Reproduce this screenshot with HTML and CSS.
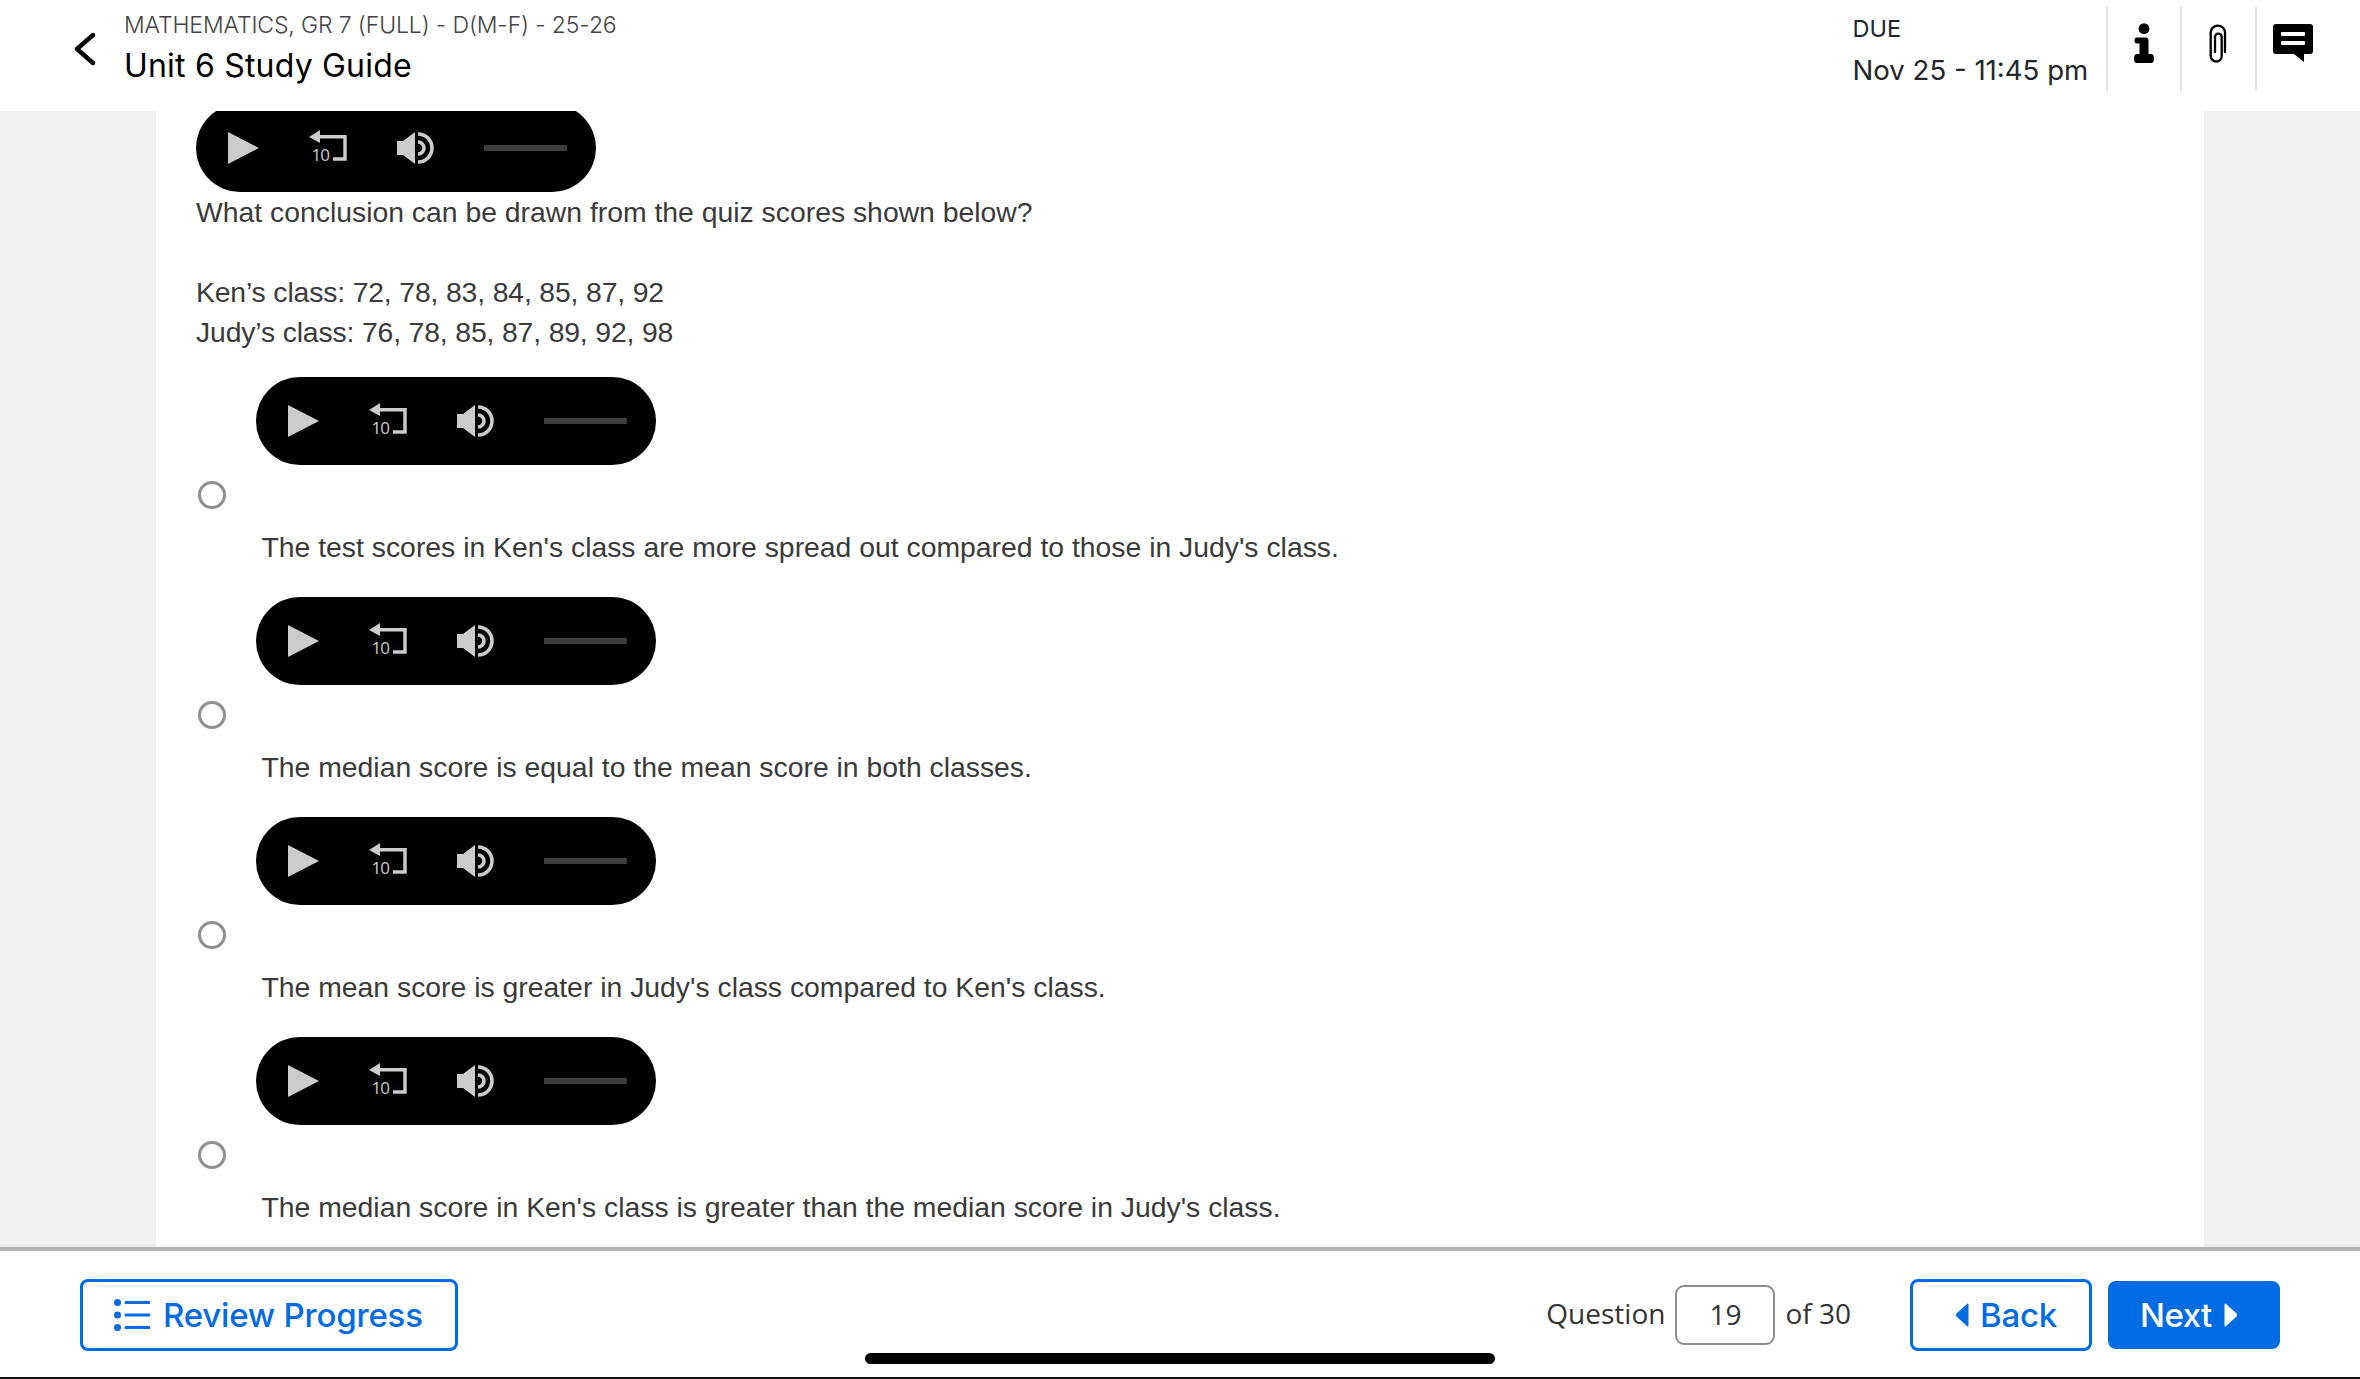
FILE: index.html
```html
<!DOCTYPE html>
<html lang="en">
<head>
<meta charset="utf-8">
<title>Unit 6 Study Guide</title>
<link rel="stylesheet" href="styles.css">
</head>
<body>
<svg class="defs" width="0" height="0" aria-hidden="true">
  <symbol id="i-play" viewBox="0 0 31 32"><polygon points="0,0 31,16 0,32"/></symbol>
  <symbol id="i-rew" viewBox="0 0 38 32">
    <polygon points="0,8 11,1 11,14"/>
    <path d="M10 7.7H36V30H24" fill="none" stroke="currentColor" stroke-width="3.4"/>
  </symbol>
  <symbol id="i-vol" viewBox="0 0 38 34">
    <polygon points="0,10 6,10 18,1 18,33 6,24 0,24"/>
    <path d="M21 11A6 6 0 0 1 21 23M21 3A14 14 0 0 1 21 31" fill="none" stroke="currentColor" stroke-width="3.6"/>
  </symbol>
</svg>
<div class="app">
  <header class="topbar">
    <svg class="chev" viewBox="0 0 24 34"><polyline points="21,3 5,17 21,31"/></svg>
    <div class="titles">
      <div class="course">MATHEMATICS, GR 7 (FULL) - D(M-F) - 25-26</div>
      <div class="title">Unit 6 Study Guide</div>
    </div>
    <div class="due">
      <div class="due-label">DUE</div>
      <div class="due-date">Nov 25 - 11:45 pm</div>
    </div>
    <div class="tool">
      <svg class="ic-info" viewBox="0 0 20 40"><circle cx="10" cy="5.6" r="5.4"/><path d="M3 14.5H11.5Q14.5 14.5 14.5 17.5V31H17Q20 31 20 35.5T17 40H3Q0 40 0 35.5T3 31H5.5V20.5H3Q0.5 20.5 0.5 17.5T3 14.5Z"/></svg>
    </div>
    <div class="tool">
      <svg class="ic-clip" viewBox="0 0 18 40"><path d="M16 29V9A7.2 7.2 0 0 0 1.7 9V33A5.5 5.5 0 0 0 12.7 33V14A3.3 3.3 0 0 0 6 14V29"/></svg>
    </div>
    <div class="tool">
      <svg class="ic-chat" viewBox="0 0 40 38"><path d="M3 0H37Q40 0 40 3V27Q40 30 37 30H31V38L21 30H3Q0 30 0 27V3Q0 0 3 0Z"/><rect x="8" y="8" width="24" height="4" rx="1" class="bar"/><rect x="8" y="17" width="24" height="4" rx="1" class="bar"/></svg>
    </div>
  </header>

  <main class="stage">
    <section class="sheet">
      <div class="player first">
        <svg class="p-play"><use href="#i-play"/></svg>
        <svg class="p-rew" viewBox="0 0 38 32"><use href="#i-rew"/><text x="2.5" y="32" class="rew-text">10</text></svg>
        <svg class="p-vol"><use href="#i-vol"/></svg>
        <span class="track"></span>
      </div>
      <p class="question">What conclusion can be drawn from the quiz scores shown below?</p>
      <p class="data">Ken’s class: 72, 78, 83, 84, 85, 87, 92<br>Judy’s class: 76, 78, 85, 87, 89, 92, 98</p>

      <div class="option">
        <div class="player">
          <svg class="p-play"><use href="#i-play"/></svg>
          <svg class="p-rew" viewBox="0 0 38 32"><use href="#i-rew"/><text x="2.5" y="32" class="rew-text">10</text></svg>
          <svg class="p-vol"><use href="#i-vol"/></svg>
          <span class="track"></span>
        </div>
        <span class="radio"></span>
        <p class="answer">The test scores in Ken's class are more spread out compared to those in Judy's class.</p>
      </div>

      <div class="option">
        <div class="player">
          <svg class="p-play"><use href="#i-play"/></svg>
          <svg class="p-rew" viewBox="0 0 38 32"><use href="#i-rew"/><text x="2.5" y="32" class="rew-text">10</text></svg>
          <svg class="p-vol"><use href="#i-vol"/></svg>
          <span class="track"></span>
        </div>
        <span class="radio"></span>
        <p class="answer">The median score is equal to the mean score in both classes.</p>
      </div>

      <div class="option">
        <div class="player">
          <svg class="p-play"><use href="#i-play"/></svg>
          <svg class="p-rew" viewBox="0 0 38 32"><use href="#i-rew"/><text x="2.5" y="32" class="rew-text">10</text></svg>
          <svg class="p-vol"><use href="#i-vol"/></svg>
          <span class="track"></span>
        </div>
        <span class="radio"></span>
        <p class="answer">The mean score is greater in Judy's class compared to Ken's class.</p>
      </div>

      <div class="option">
        <div class="player">
          <svg class="p-play"><use href="#i-play"/></svg>
          <svg class="p-rew" viewBox="0 0 38 32"><use href="#i-rew"/><text x="2.5" y="32" class="rew-text">10</text></svg>
          <svg class="p-vol"><use href="#i-vol"/></svg>
          <span class="track"></span>
        </div>
        <span class="radio"></span>
        <p class="answer">The median score in Ken's class is greater than the median score in Judy's class.</p>
      </div>
    </section>
  </main>

  <footer class="bottombar">
    <a class="btn btn-review">
      <svg class="ic-list" viewBox="0 0 36 32"><circle cx="3.5" cy="3.5" r="3.5"/><circle cx="3.5" cy="16" r="3.5"/><circle cx="3.5" cy="28.5" r="3.5"/><path d="M12 3.5H35M12 16H35M12 28.5H35"/></svg>
      <span>Review Progress</span>
    </a>
    <div class="pager">
      <span>Question</span>
      <span class="page-box">19</span>
      <span>of 30</span>
    </div>
    <a class="btn btn-back">
      <svg class="caret" viewBox="0 0 13 24"><path d="M12 0.5Q13 0 13 2V22Q13 24 12 23.5L1 13.5Q0 12 1 10.5Z"/></svg>
      <span>Back</span>
    </a>
    <a class="btn btn-next">
      <span>Next</span>
      <svg class="caret" viewBox="0 0 13 24"><path d="M1 0.5Q0 0 0 2V22Q0 24 1 23.5L12 13.5Q13 12 12 10.5Z"/></svg>
    </a>
    <span class="home-bar"></span>
  </footer>
</div>
</body>
</html>
```
FILE: styles.css
```css
* { box-sizing: border-box; }
html, body { margin: 0; height: 100%; background: #fff; overflow: hidden; }
body { font-family: "Liberation Sans", Arial, sans-serif; color: #333; }
.defs { position: absolute; }
.app { height: 1379px; display: flex; flex-direction: column; }

.topbar { height: 111px; flex: none; display: flex; align-items: flex-start; padding-right: 31px; background: #fff; position: relative; z-index: 2; }
.chev { width: 24px; height: 34px; margin: 32px 0 0 72px; fill: none; stroke: #000; stroke-width: 4.4; stroke-linecap: round; stroke-linejoin: round; }
.titles { margin-left: 28px; flex: 1; font-family: Inter, sans-serif; }
.course { margin-top: 10px; font-size: 23px; line-height: 30px; font-weight: 300; color: #444; letter-spacing: -0.13px; }
.title { margin-top: 6px; font-size: 32px; line-height: 40px; font-weight: 400; color: #000; letter-spacing: 0.2px; }
.due { width: 253px; font-family: Inter, "Liberation Sans", sans-serif; color: #22272b; }
.due-label { margin-top: 14px; font-size: 23.5px; line-height: 30px; }
.due-date { margin-top: 8px; font-size: 27.6px; line-height: 36px; }
.tool { width: 74.5px; height: 84px; margin-top: 7px; border-left: 2px solid #e2e2e2; display: flex; justify-content: center; align-items: flex-start; }
.ic-info { width: 20px; height: 40px; margin-top: 16px; fill: #000; }
.ic-clip { width: 18px; height: 40px; margin-top: 16px; fill: none; stroke: #000; stroke-width: 2.3; stroke-linecap: round; }
.ic-chat { width: 40px; height: 38px; margin-top: 17px; fill: #000; }
.ic-chat .bar { fill: #fff; }

.stage { flex: 1; min-height: 0; background: #f2f2f2; overflow: hidden; padding: 0 156px; display: flex; }
.sheet { flex: 1; background: #fff; padding-left: 40px; }

.player { width: 400px; height: 88px; background: #000; border-radius: 44px; display: flex; align-items: center; padding-left: 32px; color: #ccc; fill: #ccc; }
.first { margin-top: -7px; }
.p-play { width: 31px; height: 32px; flex: none; }
.p-rew { width: 38px; height: 32px; margin-left: 50px; margin-top: -6px; flex: none; overflow: visible; }
.p-vol { width: 38px; height: 34px; margin-left: 50px; flex: none; }
.rew-text { font-family: "Open Sans", sans-serif; font-size: 17px; fill: #ccc; letter-spacing: -1px; }
.track { width: 83px; height: 6px; margin-left: 49px; background: #3d3d3d; }

.question, .data, .answer { margin: 0; font-size: 28.35px; line-height: 40px; color: #3a3a3a; }
.data { margin-top: 40px; letter-spacing: -0.15px; }
.option { margin-top: 25px; margin-bottom: 30px; }
.option .player { margin-left: 60px; }
.radio { display: block; width: 28px; height: 28px; margin: 16px 0 0 2px; border: 3px solid #8f8f8f; border-radius: 50%; background: #fff; }
.answer { margin: 18px 0 0 65.5px; }
.option + .option { margin-top: 0; }

.bottombar { height: 132px; flex: none; background: #fff; border-top: 4px solid #b5b5b5; border-bottom: 2px solid #111; box-shadow: 0 -2px 2px rgba(0,0,0,0.05); display: flex; align-items: center; padding: 2px 80px 0; position: relative; font-family: Inter, sans-serif; }
.btn { display: flex; align-items: center; height: 72px; border-radius: 8px; border: 3px solid #006be3; font-size: 33px; font-weight: 500; letter-spacing: -0.2px; color: #006be3; background: #fff; }
.btn-review { width: 378px; padding-left: 31px; gap: 13px; }
.ic-list { width: 36px; height: 32px; fill: #006be3; stroke: none; }
.ic-list path { fill: none; stroke: #006be3; stroke-width: 3.2; stroke-linecap: round; }
.pager { margin-left: auto; display: flex; align-items: center; gap: 10px; font-family: "Open Sans", sans-serif; font-size: 28px; color: #333; margin-top: -5px; }
.page-box { width: 100px; height: 60px; border: 2px solid #8c8c8c; border-radius: 9px; display: flex; align-items: center; justify-content: center; margin-top: 5px; padding-bottom: 3px; }
.btn-back { width: 182px; margin-left: 59px; padding-left: 42px; gap: 11px; }
.btn-next { width: 172px; height: 68px; margin-left: 16px; padding-left: 29px; gap: 12px; letter-spacing: -0.5px; background: #006be3; color: #fff; }
.caret { width: 14px; height: 24px; flex: none; fill: currentColor; }
.home-bar { position: absolute; left: 865px; top: 102px; width: 630px; height: 11px; border-radius: 6px; background: #000; }
```
